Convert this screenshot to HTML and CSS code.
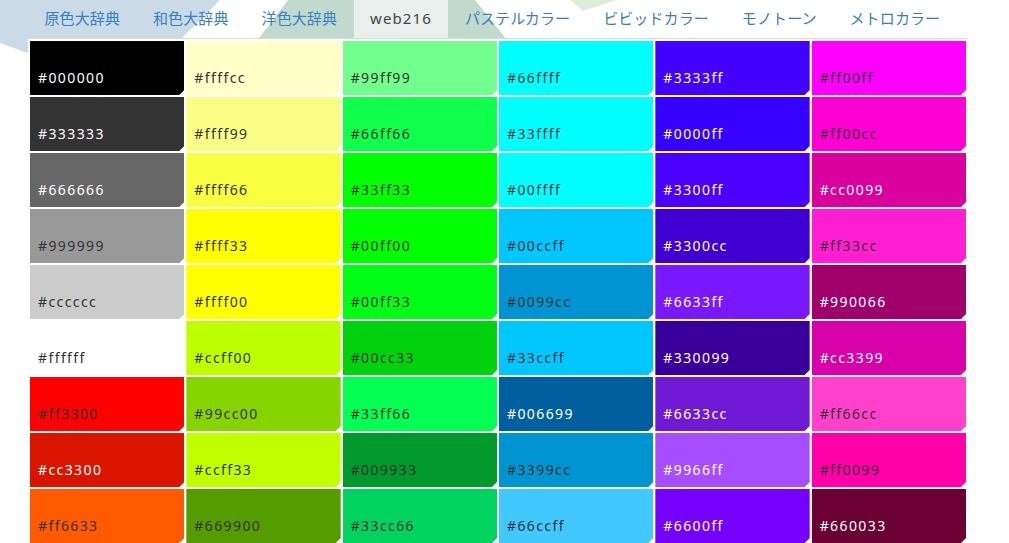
FILE: index.html
```html
<!DOCTYPE html>
<html lang="ja">
<head>
    <meta charset="UTF-8">
    <meta name="viewport" content="width=device-width, initial-scale=1.0">
    <title>web216</title>
    <link rel="stylesheet" href="styles.css">
</head>
<body>
    <!-- décor de fond -->
    <svg class="deco" width="640" height="100" viewBox="0 0 640 100">
        <polygon points="0,0 220,0 130,90 0,43" fill="#cadbe7"/>
        <polygon points="288,0 475,0 515,50 250,50" fill="#c2dacd"/>
        <polygon points="570,0 617,0 583,11" fill="#dcefd6"/>
    </svg>

    <div class="wrap">
        <nav class="tabs">
            <a class="tab" href="#">原色大辞典</a>
            <a class="tab" href="#">和色大辞典</a>
            <a class="tab" href="#">洋色大辞典</a>
            <a class="tab active" href="#">web216</a>
            <a class="tab" href="#">パステルカラー</a>
            <a class="tab" href="#">ビビッドカラー</a>
            <a class="tab" href="#">モノトーン</a>
            <a class="tab" href="#">メトロカラー</a>
        </nav>

        <div class="grid">
            <div class="cell dark" style="background:#000000">#000000</div>
            <div class="cell" style="background:#ffffc8">#ffffcc</div>
            <div class="cell" style="background:#72ff8e">#99ff99</div>
            <div class="cell" style="background:#00ffff">#66ffff</div>
            <div class="cell dark" style="background:#4100ff">#3333ff</div>
            <div class="cell" style="background:#ff00ff">#ff00ff</div>

            <div class="cell dark" style="background:#333333">#333333</div>
            <div class="cell" style="background:#f9ff85">#ffff99</div>
            <div class="cell" style="background:#10ff4c">#66ff66</div>
            <div class="cell" style="background:#00ffff">#33ffff</div>
            <div class="cell dark" style="background:#3500ff">#0000ff</div>
            <div class="cell" style="background:#ff00d4">#ff00cc</div>

            <div class="cell dark" style="background:#666666">#666666</div>
            <div class="cell" style="background:#f7ff3f">#ffff66</div>
            <div class="cell" style="background:#00ff00">#33ff33</div>
            <div class="cell" style="background:#00ffff">#00ffff</div>
            <div class="cell dark" style="background:#4a00ff">#3300ff</div>
            <div class="cell dark" style="background:#d9009e">#cc0099</div>

            <div class="cell" style="background:#999999">#999999</div>
            <div class="cell" style="background:#ffff00">#ffff33</div>
            <div class="cell" style="background:#00ff00">#00ff00</div>
            <div class="cell" style="background:#00c8ff">#00ccff</div>
            <div class="cell dark" style="background:#4000d4">#3300cc</div>
            <div class="cell" style="background:#ff1ed1">#ff33cc</div>

            <div class="cell" style="background:#cccccc">#cccccc</div>
            <div class="cell" style="background:#ffff00">#ffff00</div>
            <div class="cell" style="background:#00ff14">#00ff33</div>
            <div class="cell" style="background:#0095d2">#0099cc</div>
            <div class="cell dark" style="background:#7a19ff">#6633ff</div>
            <div class="cell dark" style="background:#a0006a">#990066</div>

            <div class="cell" style="background:#ffffff">#ffffff</div>
            <div class="cell" style="background:#bdff00">#ccff00</div>
            <div class="cell" style="background:#00d30e">#00cc33</div>
            <div class="cell" style="background:#00c8ff">#33ccff</div>
            <div class="cell dark" style="background:#39009c">#330099</div>
            <div class="cell dark" style="background:#d800a8">#cc3399</div>

            <div class="cell" style="background:#ff0000">#ff3300</div>
            <div class="cell" style="background:#86d400">#99cc00</div>
            <div class="cell" style="background:#00ff50">#33ff66</div>
            <div class="cell dark" style="background:#005f9f">#006699</div>
            <div class="cell dark" style="background:#7019d4">#6633cc</div>
            <div class="cell" style="background:#ff40cc">#ff66cc</div>

            <div class="cell dark" style="background:#d91500">#cc3300</div>
            <div class="cell" style="background:#c0ff00">#ccff33</div>
            <div class="cell" style="background:#00992b">#009933</div>
            <div class="cell" style="background:#0095d0">#3399cc</div>
            <div class="cell dark" style="background:#a54dff">#9966ff</div>
            <div class="cell" style="background:#ff00a8">#ff0099</div>

            <div class="cell" style="background:#ff5a00">#ff6633</div>
            <div class="cell" style="background:#549c00">#669900</div>
            <div class="cell" style="background:#00d45f">#33cc66</div>
            <div class="cell" style="background:#40c8ff">#66ccff</div>
            <div class="cell dark" style="background:#7600ff">#6600ff</div>
            <div class="cell dark" style="background:#6b0033">#660033</div>
        </div>
    </div>
</body>
</html>
```

FILE: styles.css
```css
body {
    font-family: "Noto Sans", "Noto Sans CJK JP", sans-serif;
    margin: 0;
    padding: 0;
    background-color: #fff;
    color: #333;
}
.deco {
    position: absolute;
    top: 0;
    left: 0;
    z-index: 0;
}
.wrap {
    position: relative;
    z-index: 1;
    width: 940px;
    margin-left: 28px;
}
.tabs {
    display: flex;
    height: 38px;
    border-bottom: 1px solid #dcdcdc;
}
.tab {
    display: block;
    padding: 0 16.5px;
    line-height: 36px;
    font-size: 15px;
    letter-spacing: 0.1px;
    color: #3580c4;
    text-decoration: none;
    white-space: nowrap;
}
.tab.active {
    background-color: #e9efed;
    color: #444;
    letter-spacing: 1.1px;
}
.grid {
    display: grid;
    grid-template-columns: repeat(6, 1fr);
    gap: 2px;
    padding: 2px;
    background: #fff;
}
.cell {
    height: 54px;
    box-sizing: border-box;
    display: flex;
    align-items: flex-end;
    padding: 0 8px 10px;
    font-size: 14px;
    line-height: 14px;
    letter-spacing: 1.4px;
    color: #333;
    clip-path: polygon(0 0, 100% 0, 100% calc(100% - 5px), calc(100% - 5px) 100%, 0 100%);
}
.cell.dark {
    color: #fff;
}
```
